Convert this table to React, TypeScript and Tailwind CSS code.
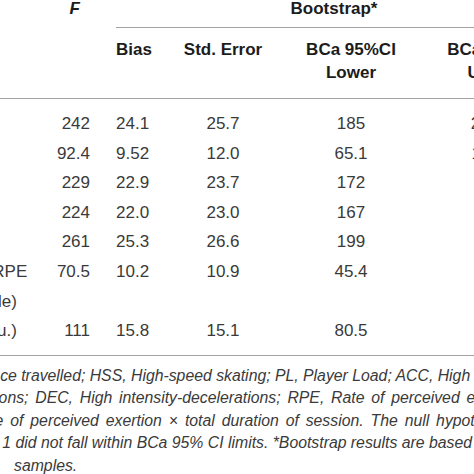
import React from 'react';

type Row = {
  label: string;
  f?: string;
  bias?: string;
  se?: string;
  lower?: string;
  upper?: string;
};

const rows: Row[] = [
  { label: 'TD (m)', f: '242', bias: '24.1', se: '25.7', lower: '185', upper: '289.4' },
  { label: 'HSS (m)', f: '92.4', bias: '9.52', se: '12.0', lower: '65.1', upper: '112.9' },
  { label: 'PL (a.u.)', f: '229', bias: '22.9', se: '23.7', lower: '172', upper: '272' },
  { label: 'ACC (n)', f: '224', bias: '22.0', se: '23.0', lower: '167', upper: '264' },
  { label: 'DEC (n)', f: '261', bias: '25.3', se: '26.6', lower: '199', upper: '309' },
  { label: 'Perceived RPE', f: '70.5', bias: '10.2', se: '10.9', lower: '45.4', upper: '95.6' },
  { label: '(CR-10 scale)' },
  { label: 'TL-RPE (a.u.)', f: '111', bias: '15.8', se: '15.1', lower: '80.5', upper: '139' },
];

const App = () => {
  return (
    <div className="h-[474px] w-[474px] overflow-hidden bg-white font-['Liberation_Sans',Arial,sans-serif]">
      <table className="-mt-px ml-[-88px] w-[640px] table-fixed border-collapse text-[17px] text-[#3a3a3a]">
        <colgroup>
          <col className="w-[138px]" />
          <col className="w-[66px]" />
          <col className="w-[60px]" />
          <col className="w-[94px]" />
          <col className="w-[162px]" />
          <col className="w-[120px]" />
        </colgroup>
        <thead className="font-bold text-[#1c1c1c]">
          <tr className="leading-[19px]">
            <th className="p-0 pb-[9px]" />
            <th className="p-0 pb-[9px] pr-[36px] text-right italic">F</th>
            <th colSpan={4} className="border-b border-[#a3a3a3] p-0 pb-[9px] text-center">
              Bootstrap*
            </th>
          </tr>
          <tr className="border-b border-[#a3a3a3] align-top leading-[23px]">
            <th className="p-0 pt-[10px] pb-[14px]" />
            <th className="p-0 pt-[10px] pb-[14px]" />
            <th className="p-0 pt-[10px] pb-[14px] text-left">Bias</th>
            <th className="p-0 pt-[10px] pb-[14px] text-center">Std. Error</th>
            <th className="p-0 pt-[10px] pb-[14px] text-center">
              BCa 95%CI
              <br />
              Lower
            </th>
            <th className="p-0 pt-[10px] pb-[14px] text-center">
              BCa 95%CI
              <br />
              Upper
            </th>
          </tr>
        </thead>
        <tbody className="leading-[29.6px]">
          {rows.map((row, i) => {
            const first = i === 0;
            const last = i === rows.length - 1;
            const pad = `${first ? 'pt-[10px]' : ''} ${last ? 'pb-[9px]' : ''}`;
            return (
              <tr key={i} className={last ? 'border-b border-[#a3a3a3]' : ''}>
                <td className={`p-0 ${pad} whitespace-nowrap text-left`}>{row.label}</td>
                <td className={`p-0 ${pad} pr-[26px] text-right`}>{row.f}</td>
                <td className={`p-0 ${pad} text-left`}>{row.bias}</td>
                <td className={`p-0 ${pad} text-center`}>{row.se}</td>
                <td className={`p-0 ${pad} text-center`}>{row.lower}</td>
                <td className={`p-0 ${pad} text-center`}>{row.upper}</td>
              </tr>
            );
          })}
        </tbody>
      </table>

      <div className="whitespace-nowrap pt-[9px] text-[15.8px] italic leading-[22.5px] text-[#3a3a3a]">
        <div className="ml-[-42px]">
          distance travelled; HSS, High-speed skating; PL, Player Load; ACC, High intensity-
        </div>
        <div className="ml-[-69px] [word-spacing:2.4px]">
          accelerations; DEC, High intensity-decelerations; RPE, Rate of perceived exertion; sRPE,
        </div>
        <div className="ml-[-30px] [word-spacing:2.5px]">
          Rate of perceived exertion × total duration of session. The null hypothesis was rejected
        </div>
        <div className="ml-[-10px]">
          if 1 did not fall within BCa 95% CI limits. *Bootstrap results are based on 1000 bootstrap
        </div>
        <div className="ml-[14px]">samples.</div>
      </div>
    </div>
  );
};

export default App;
